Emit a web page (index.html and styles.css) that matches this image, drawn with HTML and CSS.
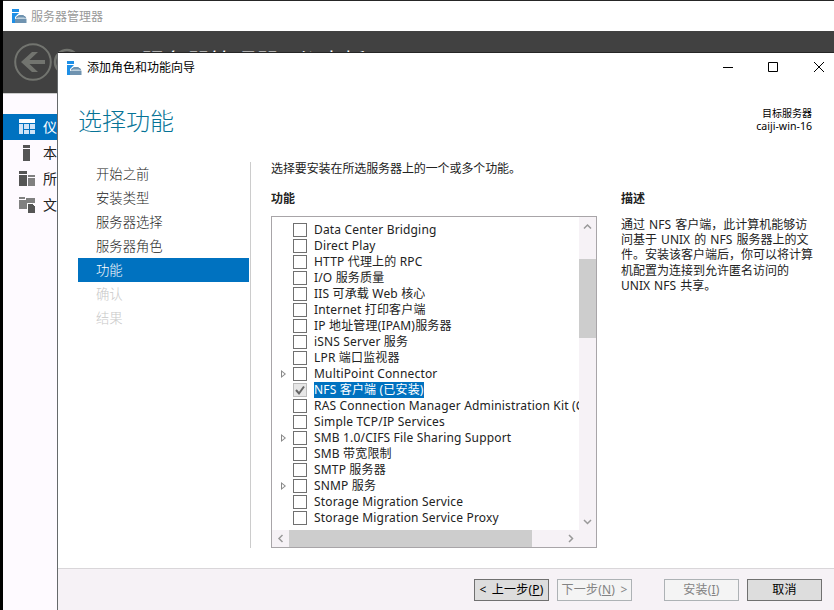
FILE: index.html
```html
<!DOCTYPE html>
<html lang="zh-CN">
<head>
    <meta charset="UTF-8">
    <meta name="viewport" content="width=device-width, initial-scale=1.0">
    <title>服务器管理器</title>
    <link rel="stylesheet" href="styles.css">
</head>
<body>
    <svg class="defs" width="0" height="0">
        <symbol id="app-icon" viewBox="0 0 15 14">
            <path fill="#1e8fe6" d="M0 0h7v3H0zM0 4h7L3 8v6H0z"/>
            <path fill="none" stroke="#6f93b0" stroke-width="1" d="M6.500 7.500V6.500h5v1"/>
            <path fill="#6f93b0" d="M5 7h8l1.500 2.500h-11zM3 10h11.500v4H3z"/>
            <path fill="#c8dae6" d="M5.500 8.500h7v1h-7z"/>
        </symbol>
    </svg>

    <!-- Janela principal -->
    <div class="manager">
        <div class="manager-title">
            <svg class="app-icon"><use href="#app-icon"/></svg>
            <span>服务器管理器</span>
        </div>
        <div class="manager-header">
            <svg class="nav-arrows" width="70" height="46" viewBox="0 0 70 46" fill="none" stroke="#72746f">
                <circle cx="20" cy="23" r="17.800" stroke-width="2"/>
                <circle cx="54" cy="23" r="12" stroke-width="2.500"/>
                <path fill="#72746f" stroke="none" d="M8 23L19 13h6l-8.500 8H32v4H16.500l8.500 8h-6z"/>
            </svg>
            <span class="breadcrumb">服务器管理器 · 仪表板</span>
        </div>
        <div class="sidebar">
            <div class="side-item active">
                <svg width="16" height="16" fill="#cfe4f7"><path fill="#fff" d="M0 0h16v4H0z"/><path d="M0 5h4v10H0zM5 5h5v5H5zM11 5h5v5h-5zM5 11h5v4H5zM11 11h5v4h-5z"/></svg>
                <span>仪表板</span>
            </div>
            <div class="side-item">
                <svg width="16" height="16" fill="#555"><path d="M4 0h7v3H4zM4 4h7v12H4z"/></svg>
                <span>本地服务器</span>
            </div>
            <div class="side-item">
                <svg width="16" height="16" fill="#555"><path d="M0 0h8v3H0zM0 4h8v11H0z"/><path fill="#808080" d="M9 4h7v2H9zM9 7h7v8H9z"/></svg>
                <span>所有服务器</span>
            </div>
            <div class="side-item">
                <svg width="16" height="16" fill="#808080"><path d="M0 0h6v2H0zM0 3h8v9H0zM7 1h9v5H7z"/><path fill="#555" stroke="#fff" stroke-width="1" d="M8.500 6.500h5l3 3v7h-8z"/></svg>
                <span>文件和存储服务</span>
            </div>
        </div>
    </div>

    <!-- Assistente -->
    <div class="wizard">
        <div class="wizard-title">
            <svg class="app-icon"><use href="#app-icon"/></svg>
            <span>添加角色和功能向导</span>
            <svg class="window-buttons" width="103" height="12" fill="none" stroke="#000">
                <path d="M0 6.500h10M45.500 1.500h9v9h-9z"/>
                <path d="M91 1l10 10M101 1l-10 10"/>
            </svg>
        </div>
        <div class="wizard-header">
            <h1>选择功能</h1>
            <div class="target">
                <div>目标服务器</div>
                <div class="target-name">caiji-win-16</div>
            </div>
        </div>
        <div class="wizard-body">
            <ul class="steps">
                <li>开始之前</li>
                <li>安装类型</li>
                <li>服务器选择</li>
                <li>服务器角色</li>
                <li class="current">功能</li>
                <li class="disabled">确认</li>
                <li class="disabled">结果</li>
            </ul>
            <div class="features">
                <p class="hint">选择要安装在所选服务器上的一个或多个功能。</p>
                <h2>功能</h2>
                <div class="listbox">
                    <ul class="feature-list">
                        <li><i></i><b></b><span>Data Center Bridging</span></li>
                        <li><i></i><b></b><span>Direct Play</span></li>
                        <li><i></i><b></b><span>HTTP 代理上的 RPC</span></li>
                        <li><i></i><b></b><span>I/O 服务质量</span></li>
                        <li><i></i><b></b><span>IIS 可承载 Web 核心</span></li>
                        <li><i></i><b></b><span>Internet 打印客户端</span></li>
                        <li><i></i><b></b><span>IP 地址管理(IPAM)服务器</span></li>
                        <li><i></i><b></b><span>iSNS Server 服务</span></li>
                        <li><i></i><b></b><span>LPR 端口监视器</span></li>
                        <li><i class="expand"></i><b></b><span>MultiPoint Connector</span></li>
                        <li><i></i><b class="checked"><svg width="12" height="12"><path d="M2 6l3 3.500L10 2.500"/></svg></b><span class="selected">NFS 客户端 (已安装)</span></li>
                        <li><i></i><b></b><span>RAS Connection Manager Administration Kit (CMAK)</span></li>
                        <li><i></i><b></b><span>Simple TCP/IP Services</span></li>
                        <li><i class="expand"></i><b></b><span>SMB 1.0/CIFS File Sharing Support</span></li>
                        <li><i></i><b></b><span>SMB 带宽限制</span></li>
                        <li><i></i><b></b><span>SMTP 服务器</span></li>
                        <li><i class="expand"></i><b></b><span>SNMP 服务</span></li>
                        <li><i></i><b></b><span>Storage Migration Service</span></li>
                        <li><i></i><b></b><span>Storage Migration Service Proxy</span></li>
                    </ul>
                    <div class="scroll-y">
                        <svg width="17" height="17"><path d="M5 11.500l3.500-3.500L12 11.500"/></svg>
                        <div class="thumb-y"></div>
                        <svg width="17" height="17"><path d="M5 7l3.500 3.500L12 7"/></svg>
                    </div>
                    <div class="scroll-x">
                        <svg width="17" height="17"><path d="M10.500 5L7 8.500l3.500 3.500"/></svg>
                        <div class="thumb-x"></div>
                        <svg width="17" height="17"><path d="M7 5l3.500 3.500L7 12"/></svg>
                    </div>
                </div>
            </div>
            <div class="description">
                <h2>描述</h2>
                <p>通过 NFS 客户端，此计算机能够访<br>问基于 UNIX 的 NFS 服务器上的文<br>件。安装该客户端后，你可以将计算<br>机配置为连接到允许匿名访问的<br>UNIX NFS 共享。</p>
            </div>
        </div>
        <div class="wizard-footer">
            <button>&lt; 上一步(<u>P</u>)</button>
            <button disabled>下一步(<u>N</u>) &gt;</button>
            <button class="install" disabled>安装(<u>I</u>)</button>
            <button>取消</button>
        </div>
    </div>
</body>
</html>
```
FILE: styles.css
```css
* {
    box-sizing: border-box;
}

body {
    margin: 0;
    width: 834px;
    height: 610px;
    overflow: hidden;
    position: relative;
    background-color: #000;
    font-family: 'Noto Sans', 'Noto Sans CJK SC', sans-serif;
    font-size: 12px;
    color: #222;
}

.defs {
    position: absolute;
}

.app-icon {
    width: 15px;
    height: 14px;
    flex: none;
}

h1, h2, p, ul {
    margin: 0;
    padding: 0;
    font-weight: normal;
    list-style: none;
}

/* Janela principal */
.manager {
    height: 610px;
    margin-left: 3px;
    border-top: 1px solid #262626;
    background-color: #fefaff;
    overflow: hidden;
}

.manager-title {
    height: 30px;
    padding-left: 9px;
    display: flex;
    align-items: center;
    gap: 4px;
    background-color: #fff;
    color: #999;
    font-family: 'Noto Sans CJK SC', sans-serif;
}

.manager-title span,
.wizard-title span {
    padding-bottom: 2px;
}

.manager-header {
    height: 63px;
    padding: 8px 0 0 10px;
    display: flex;
    background-color: #414141;
    border-bottom: 1px solid #ccc;
}

.nav-arrows {
    flex: none;
}

.breadcrumb {
    margin: 5px 0 0 58px;
    color: #fff;
    font-size: 23px;
    line-height: 34px;
    white-space: nowrap;
}

.sidebar {
    width: 54px;
    padding-top: 20px;
    overflow: hidden;
}

.side-item {
    height: 26px;
    padding-left: 16px;
    display: flex;
    align-items: center;
    gap: 8px;
    font-size: 14px;
    white-space: nowrap;
}

.side-item span {
    padding-bottom: 2px;
}

.side-item svg {
    flex: none;
}

.side-item.active {
    background-color: #0072c0;
    color: #fff;
}

/* Assistente sobre a janela principal */
.wizard {
    position: absolute;
    left: 57px;
    top: 52px;
    width: 777px;
    height: 558px;
    display: flex;
    flex-direction: column;
    border-left: 1px solid #66696b;
    border-top: 1px solid #262626;
    background-color: #fff;
}

.wizard-title {
    height: 29px;
    padding: 0 8px 0 9px;
    display: flex;
    align-items: center;
    gap: 5px;
    color: #000;
    font-family: 'Noto Sans CJK SC', sans-serif;
}

.window-buttons {
    margin: 0 0 2px auto;
}

.wizard-header {
    height: 80px;
    padding: 19px 22px 0 20px;
    display: flex;
    justify-content: space-between;
}

.wizard-header h1 {
    color: #067396;
    font-family: 'Noto Sans CJK SC', sans-serif;
    font-size: 24px;
    font-weight: 300;
    line-height: 38px;
}

.target {
    padding-top: 6px;
    font-size: 10px;
    line-height: 13px;
    text-align: right;
    color: #000;
}

.target-name {
    font-size: 10.6px;
    line-height: 12px;
}

.wizard-body {
    height: 386px;
    display: flex;
    padding-left: 20px;
}

.steps {
    width: 173px;
    padding-right: 1px;
    border-right: 1px solid #ccc;
    font-family: 'Noto Sans CJK SC', sans-serif;
    font-size: 13.33px;
    font-weight: 300;
    color: #222;
}

.steps li {
    height: 24px;
    padding-left: 18px;
    line-height: 24px;
}

.steps .current {
    background-color: #0072c0;
    color: #fff;
}

.steps .disabled {
    color: #c8c8c8;
}

.features {
    width: 326px;
    margin-left: 20px;
}

.hint {
    height: 14px;
    line-height: 14px;
    letter-spacing: -0.1px;
    white-space: nowrap;
}

h2 {
    font-size: 12px;
    font-weight: bold;
    line-height: 18px;
}

.features h2 {
    margin: 14px 0 8px;
}

.listbox {
    width: 326px;
    height: 332px;
    display: grid;
    grid-template: 313px 17px / 307px 17px;
    border: 1px solid #a8a5a8;
}

.feature-list {
    padding-top: 5px;
    overflow: hidden;
    color: #222;
    letter-spacing: 0.17px;
}

.feature-list li {
    height: 16px;
    padding-left: 8px;
    display: flex;
    align-items: center;
    line-height: 16px;
    white-space: nowrap;
}

.feature-list i {
    width: 13px;
    flex: none;
}

.feature-list .expand::before {
    content: '';
    display: block;
    width: 5px;
    height: 8px;
    margin-left: 1px;
    background-color: #888;
    clip-path: polygon(0 0, 100% 50%, 0 100%, 0 0, 1px 2px, 1px 6px, 3.5px 4px, 1px 2px);
}

.feature-list b {
    width: 14px;
    height: 14px;
    margin-right: 7px;
    flex: none;
    border: 1px solid #707070;
    background-color: #fff;
}

.feature-list b.checked {
    border-color: #bbb;
    background-color: #e6e6e6;
}

.checked svg {
    display: block;
    fill: none;
    stroke: #666;
    stroke-width: 2;
}

.feature-list .selected {
    background-color: #0072c0;
    color: #fff;
}

.scroll-y,
.scroll-x {
    display: flex;
    background-color: #f6f2f6;
}

.scroll-y {
    flex-direction: column;
}

.scroll-x {
    grid-column: 1 / 3;
}

.scroll-y svg,
.scroll-x svg {
    flex: none;
    fill: none;
    stroke: #999;
    stroke-width: 1.5;
}

.thumb-y {
    height: 79px;
    margin: 25px 0 175px;
    background-color: #cdcdcd;
}

.thumb-x {
    width: 243px;
    margin-right: 30px;
    background-color: #cdcdcd;
}

.description {
    margin-left: 24px;
}

.description h2 {
    margin: 28px 0 9px;
}

.description p {
    line-height: 15.2px;
    word-spacing: 1px;
    white-space: nowrap;
}

.wizard-footer {
    height: 42px;
    margin-top: 20px;
    padding: 10px 12px 0 0;
    display: flex;
    justify-content: flex-end;
    gap: 8px;
    border-top: 1px solid #d9d6d9;
    background-color: #f6f2f6;
}

button {
    width: 75px;
    height: 22px;
    padding: 0;
    border: 1px solid #707070;
    background-color: #dddddd;
    color: #000;
    font-family: inherit;
    font-size: 12px;
    line-height: 20px;
    word-spacing: 2px;
    letter-spacing: 0.2px;
    white-space: nowrap;
}

button:disabled {
    border-color: #adb2b5;
    background-color: #f4f4f4;
    color: #838383;
}

.install {
    margin-left: 24px;
}
```
